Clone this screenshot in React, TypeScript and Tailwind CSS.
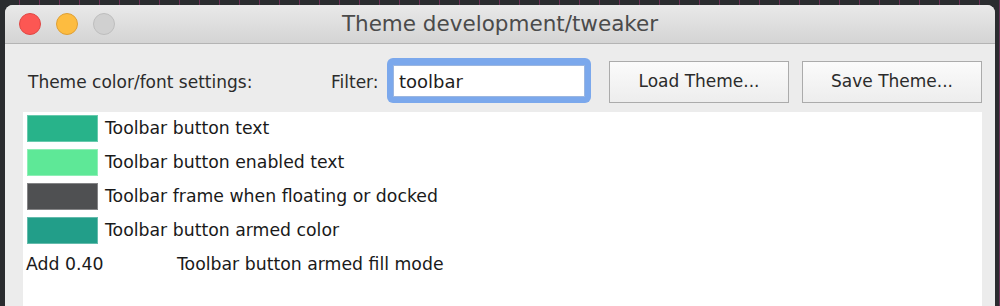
const rows = [
    { color: "bg-[#28b38a]", label: "Toolbar button text" },
    { color: "bg-[#5ee897]", label: "Toolbar button enabled text" },
    { color: "bg-[#4f5052]", label: "Toolbar frame when floating or docked" },
    { color: "bg-[#229e89]", label: "Toolbar button armed color" },
];

const App = () => {
    return (
        <div
            className="w-[1000px] h-[306px] overflow-hidden bg-[#2a2c2f] pl-[5px] pt-[5px]
                       bg-[repeating-linear-gradient(90deg,transparent_0px,transparent_19px,#6a2f55_19px,#6a2f55_20px)]
                       font-['DejaVu_Sans',Arial,sans-serif]"
        >
            <div className="w-[990px] h-[320px] flex flex-col bg-[#ececec] rounded-t-[8px] overflow-hidden">
                {/* Title bar */}
                <div className="h-[39px] shrink-0 grid grid-cols-[1fr_auto_1fr] items-center
                                bg-gradient-to-b from-[#e9e9e9] to-[#d4d4d4] border-b border-[#b4b4b4]">
                    <div className="flex items-center gap-[15px] pl-[14px]">
                        <span className="w-[22px] h-[22px] rounded-full bg-[#fc5753] border border-[#df4744]" />
                        <span className="w-[22px] h-[22px] rounded-full bg-[#fdbc40] border border-[#de9f34]" />
                        <span className="w-[22px] h-[22px] rounded-full bg-[#d0d0d0] border border-[#bdbdbd]" />
                    </div>
                    <div className="text-[21.5px] text-[#4b4b4b] leading-none">Theme development/tweaker</div>
                    <div />
                </div>

                {/* Controls row */}
                <div className="h-[68px] shrink-0 flex items-start">
                    <div className="w-[326px] pl-[23px] mt-[28px] text-[17px] leading-[20px] text-[#2b2b2b]">
                        Theme color/font settings:
                    </div>
                    <div className="w-[56px] mt-[28px] text-[17px] leading-[20px] text-[#2b2b2b]">Filter:</div>
                    <div className="w-[204px] h-[45px] mt-[14px] bg-[#7ba8ec] rounded-[6px] px-[6px] pt-[7px] pb-[6px]">
                        <div className="h-[32px] bg-white border border-[#9bb6e0] flex items-center pl-[5px]
                                        text-[18px] text-[#1e1e1e]">
                            toolbar
                        </div>
                    </div>
                    <button className="w-[180px] h-[42px] ml-[18px] mt-[17px] bg-gradient-to-b from-[#fbfbfb] to-[#ededed]
                                       border border-[#ababab] text-[17px] text-[#2b2b2b]">
                        Load Theme...
                    </button>
                    <button className="w-[180px] h-[42px] ml-[13px] mt-[17px] bg-gradient-to-b from-[#fbfbfb] to-[#ededed]
                                       border border-[#ababab] text-[17px] text-[#2b2b2b]">
                        Save Theme...
                    </button>
                </div>

                {/* List */}
                <div className="flex-1 ml-[18px] w-[959px] bg-white pt-[3px] pl-[4px] flex flex-col gap-[7px]">
                    {rows.map((r) => (
                        <div key={r.label} className="flex items-center gap-[7px] h-[27px]">
                            <span className={`w-[71px] h-[27px] ${r.color} border border-white/30`} />
                            <span className="text-[17.3px] text-[#1a1a1a]">{r.label}</span>
                        </div>
                    ))}
                    <div className="flex items-center gap-[7px] h-[27px]">
                        <span className="w-[144px] -ml-[1px] text-[17.3px] text-[#1a1a1a]">Add 0.40</span>
                        <span className="text-[17.3px] text-[#1a1a1a]">Toolbar button armed fill mode</span>
                    </div>
                </div>
            </div>
        </div>
    );
};

export default App;
